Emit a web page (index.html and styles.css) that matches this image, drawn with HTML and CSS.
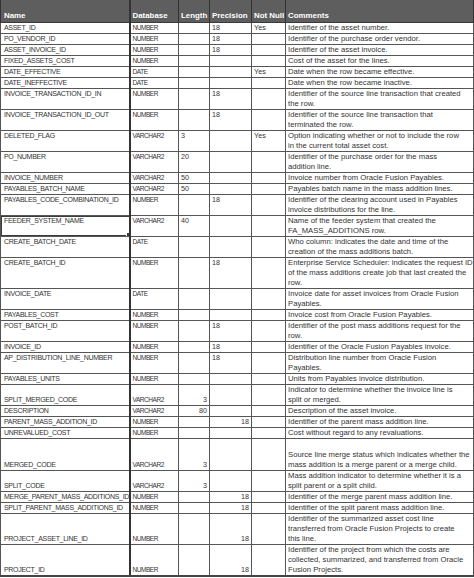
FILE: index.html
```html
<!DOCTYPE html>
<html>
<head>
<meta charset="utf-8">
<link rel="stylesheet" href="styles.css">
</head>
<body>
<table class="grid">
<colgroup>
<col class="c-name"><col class="c-db"><col class="c-len"><col class="c-prec"><col class="c-nn"><col class="c-com">
</colgroup>
<thead>
<tr><th>Name</th><th>Database</th><th>Length</th><th>Precision</th><th>Not Null</th><th>Comments</th></tr>
</thead>
<tbody>
<tr><td class="n">ASSET_ID</td><td class="d">NUMBER</td><td></td><td>18</td><td>Yes</td><td class="c">Identifier of the asset number.</td></tr>
<tr><td class="n">PO_VENDOR_ID</td><td class="d">NUMBER</td><td></td><td>18</td><td></td><td class="c">Identifier of the purchase order vendor.</td></tr>
<tr><td class="n">ASSET_INVOICE_ID</td><td class="d">NUMBER</td><td></td><td>18</td><td></td><td class="c">Identifier of the asset invoice.</td></tr>
<tr><td class="n">FIXED_ASSETS_COST</td><td class="d">NUMBER</td><td></td><td></td><td></td><td class="c">Cost of the asset for the lines.</td></tr>
<tr><td class="n">DATE_EFFECTIVE</td><td class="d">DATE</td><td></td><td></td><td>Yes</td><td class="c">Date when the row became effective.</td></tr>
<tr><td class="n">DATE_INEFFECTIVE</td><td class="d">DATE</td><td></td><td></td><td></td><td class="c">Date when the row became inactive.</td></tr>
<tr><td class="n">INVOICE_TRANSACTION_ID_IN</td><td class="d">NUMBER</td><td></td><td>18</td><td></td><td class="c">Identifier of the source line transaction that created<br>the row.</td></tr>
<tr><td class="n">INVOICE_TRANSACTION_ID_OUT</td><td class="d">NUMBER</td><td></td><td>18</td><td></td><td class="c">Identifier of the source line transaction that<br>terminated the row.</td></tr>
<tr><td class="n">DELETED_FLAG</td><td class="d">VARCHAR2</td><td>3</td><td></td><td>Yes</td><td class="c">Option indicating whether or not to include the row<br>in the current total asset cost.</td></tr>
<tr><td class="n">PO_NUMBER</td><td class="d">VARCHAR2</td><td>20</td><td></td><td></td><td class="c">Identifier of the purchase order for the mass<br>addition line.</td></tr>
<tr><td class="n">INVOICE_NUMBER</td><td class="d">VARCHAR2</td><td>50</td><td></td><td></td><td class="c">Invoice number from Oracle Fusion Payables.</td></tr>
<tr><td class="n">PAYABLES_BATCH_NAME</td><td class="d">VARCHAR2</td><td>50</td><td></td><td></td><td class="c">Payables batch name in the mass addition lines.</td></tr>
<tr><td class="n">PAYABLES_CODE_COMBINATION_ID</td><td class="d">NUMBER</td><td></td><td>18</td><td></td><td class="c">Identifier of the clearing account used in Payables<br>invoice distributions for the line.</td></tr>
<tr><td class="n selected">FEEDER_SYSTEM_NAME<span class="sel"></span></td><td class="d">VARCHAR2</td><td>40</td><td></td><td></td><td class="c">Name of the feeder system that created the<br>FA_MASS_ADDITIONS row.</td></tr>
<tr><td class="n">CREATE_BATCH_DATE</td><td class="d">DATE</td><td></td><td></td><td></td><td class="c">Who column: indicates the date and time of the<br>creation of the mass additions batch.</td></tr>
<tr><td class="n">CREATE_BATCH_ID</td><td class="d">NUMBER</td><td></td><td>18</td><td></td><td class="c">Enterprise Service Scheduler: indicates the request ID<br>of the mass additions create job that last created the<br>row.</td></tr>
<tr><td class="n">INVOICE_DATE</td><td class="d">DATE</td><td></td><td></td><td></td><td class="c">Invoice date for asset invoices from Oracle Fusion<br>Payables.</td></tr>
<tr><td class="n">PAYABLES_COST</td><td class="d">NUMBER</td><td></td><td></td><td></td><td class="c">Invoice cost from Oracle Fusion Payables.</td></tr>
<tr><td class="n">POST_BATCH_ID</td><td class="d">NUMBER</td><td></td><td>18</td><td></td><td class="c">Identifier of the post mass additions request for the<br>row.</td></tr>
<tr><td class="n">INVOICE_ID</td><td class="d">NUMBER</td><td></td><td>18</td><td></td><td class="c">Identifier of the Oracle Fusion Payables invoice.</td></tr>
<tr><td class="n">AP_DISTRIBUTION_LINE_NUMBER</td><td class="d">NUMBER</td><td></td><td>18</td><td></td><td class="c">Distribution line number from Oracle Fusion<br>Payables.</td></tr>
<tr><td class="n">PAYABLES_UNITS</td><td class="d">NUMBER</td><td></td><td></td><td></td><td class="c">Units from Payables invoice distribution.</td></tr>
<tr class="bot"><td class="n">SPLIT_MERGED_CODE</td><td class="d">VARCHAR2</td><td class="r">3</td><td></td><td></td><td class="c">Indicator to determine whether the invoice line is<br>split or merged.</td></tr>
<tr class="bot"><td class="n">DESCRIPTION</td><td class="d">VARCHAR2</td><td class="r">80</td><td></td><td></td><td class="c">Description of the asset invoice.</td></tr>
<tr class="bot"><td class="n">PARENT_MASS_ADDITION_ID</td><td class="d">NUMBER</td><td></td><td class="r">18</td><td></td><td class="c">Identifier of the parent mass addition line.</td></tr>
<tr class="bot"><td class="n">UNREVALUED_COST</td><td class="d">NUMBER</td><td></td><td></td><td></td><td class="c">Cost without regard to any revaluations.</td></tr>
<tr class="bot h3"><td class="n">MERGED_CODE</td><td class="d">VARCHAR2</td><td class="r">3</td><td></td><td></td><td class="c">Source line merge status which indicates whether the<br>mass addition is a merge parent or a merge child.</td></tr>
<tr class="bot"><td class="n">SPLIT_CODE</td><td class="d">VARCHAR2</td><td class="r">3</td><td></td><td></td><td class="c">Mass addition indicator to determine whether it is a<br>split parent or a split child.</td></tr>
<tr class="bot"><td class="n">MERGE_PARENT_MASS_ADDITIONS_ID</td><td class="d">NUMBER</td><td></td><td class="r">18</td><td></td><td class="c">Identifier of the merge parent mass addition line.</td></tr>
<tr class="bot"><td class="n">SPLIT_PARENT_MASS_ADDITIONS_ID</td><td class="d">NUMBER</td><td></td><td class="r">18</td><td></td><td class="c">Identifier of the split parent mass addition line.</td></tr>
<tr class="bot"><td class="n">PROJECT_ASSET_LINE_ID</td><td class="d">NUMBER</td><td></td><td class="r">18</td><td></td><td class="c">Identifier of the summarized asset cost line<br>transferred from Oracle Fusion Projects to create<br>this line.</td></tr>
<tr class="bot last"><td class="n">PROJECT_ID</td><td class="d">NUMBER</td><td></td><td class="r">18</td><td></td><td class="c">Identifier of the project from which the costs are<br>collected, summarized, and transferred from Oracle<br>Fusion Projects.</td></tr>
</tbody>
</table>
</body>
</html>
```

FILE: styles.css
```css
html, body {
  margin: 0;
  padding: 0;
  background: #ffffff;
}

.grid {
  border-collapse: collapse;
  table-layout: fixed;
  width: 473px;
  font-family: "Liberation Sans", Arial, sans-serif;
  color: #333333;
}

.c-name { width: 129px; }
.c-db { width: 49px; }
.c-len { width: 31px; }
.c-prec { width: 42px; }
.c-nn { width: 34px; }
.c-com { width: 188px; }

.grid th {
  background: #5e5e5e;
  color: #ffffff;
  font-weight: bold;
  font-size: 7.9px;
  line-height: 9px;
  height: 20px;
  padding: 0 2px 2px 2px;
  text-align: left;
  vertical-align: bottom;
  white-space: nowrap;
  overflow: hidden;
  border-left: 1px solid #333333;
  border-right: 1px solid #333333;
  border-bottom: 1px solid #3a3a3a;
}

.grid th:first-child {
  padding-left: 3px;
  border-right: 2px solid #333333;
}

.grid td {
  border: 1px solid #555555;
  padding: 0 2px;
  font-size: 7.2px;
  line-height: 10px;
  vertical-align: top;
  white-space: nowrap;
  overflow: hidden;
}

.grid td.n {
  font-size: 7px;
  letter-spacing: -0.3px;
  padding-left: 3px;
  padding-right: 0;
  text-overflow: clip;
  border-right: 2px solid #333333;
}

.grid td.d {
  font-size: 6.5px;
  letter-spacing: -0.45px;
}

.grid td.c {
  font-size: 7.7px;
  padding-right: 1px;
}

.grid td.r {
  text-align: right;
}

.grid tr.bot td {
  vertical-align: bottom;
}

.grid tr.h3 td {
  height: 31px;
}

.grid tr.last td {
  border-bottom: 2px solid #444444;
}

.grid td.selected {
  position: relative;
}

.sel {
  position: absolute;
  left: -1px;
  top: -1px;
  right: -2px;
  bottom: -1px;
  border: 2px solid #3c3c3c;
}

.sel::after {
  content: "";
  position: absolute;
  right: -3px;
  bottom: -3px;
  width: 4px;
  height: 4px;
  background: #3c3c3c;
  border: 1px solid #ffffff;
}
```
